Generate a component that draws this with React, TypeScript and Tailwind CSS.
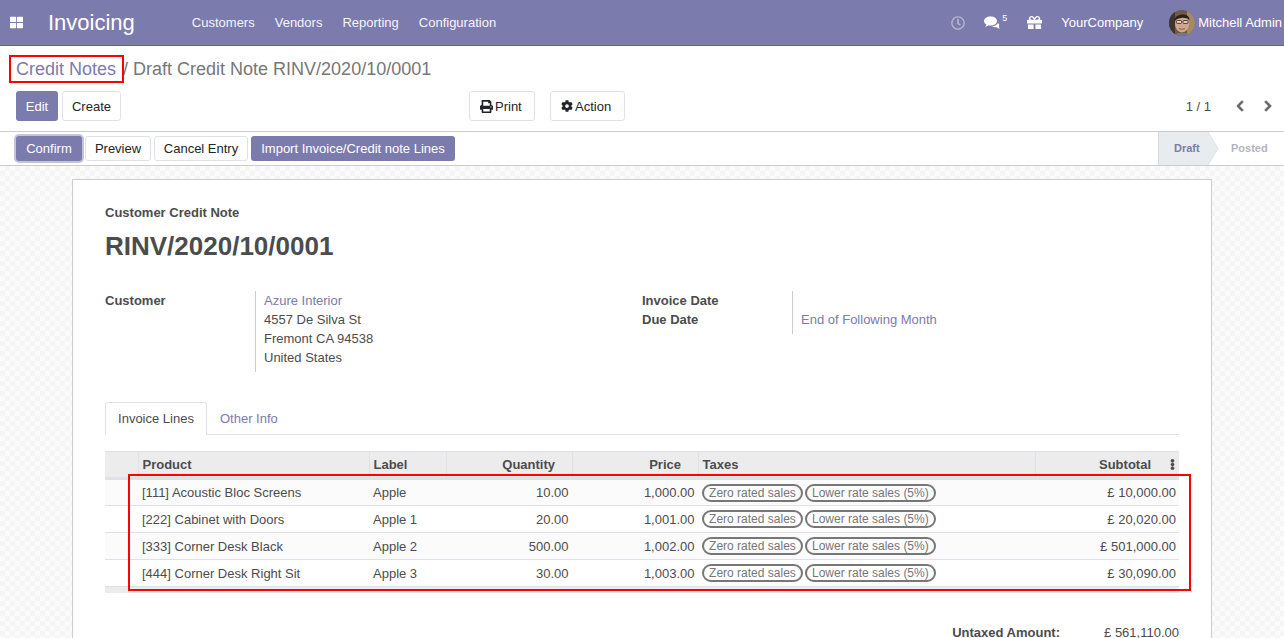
import { FaThLarge, FaRegClock, FaGift, FaPrint, FaCog, FaChevronLeft, FaChevronRight, FaEllipsisV } from "react-icons/fa";

const rows = [
  ["[111] Acoustic Bloc Screens", "Apple", "10.00", "1,000.00", "£ 10,000.00"],
  ["[222] Cabinet with Doors", "Apple 1", "20.00", "1,001.00", "£ 20,020.00"],
  ["[333] Corner Desk Black", "Apple 2", "500.00", "1,002.00", "£ 501,000.00"],
  ["[444] Corner Desk Right Sit", "Apple 3", "30.00", "1,003.00", "£ 30,090.00"],
];

function Tag({ children }: { children: string }) {
  return (
    <span className="inline-block h-[18px] rounded-[9px] border-2 border-[#777] px-[5.1px] text-[12px] leading-[14px] text-[#777]">
      {children}
    </span>
  );
}

function Avatar() {
  return (
    <svg width="26" height="26" viewBox="0 0 26 26" className="rounded-full">
      <rect width="26" height="26" fill="#6f5a48" />
      <rect x="18" y="0" width="8" height="26" fill="#a58a68" />
      <rect x="0" y="0" width="6" height="26" fill="#3f352e" />
      <ellipse cx="13" cy="14" rx="7" ry="8.5" fill="#d2a68c" />
      <path d="M5.5 11 C5 3 21 2 20.5 10 C17 7 10 7 5.5 11Z" fill="#2b211b" />
      <rect x="7.5" y="10.5" width="5" height="3" rx="1" fill="#e3c9b8" stroke="#2a2a2a" strokeWidth="0.8" />
      <rect x="14" y="10.5" width="5" height="3" rx="1" fill="#e3c9b8" stroke="#2a2a2a" strokeWidth="0.8" />
      <path d="M5 26 C7 21.5 19 21.5 22 26Z" fill="#6b7c86" />
      <path d="M10 18.5 Q13 20 16 18.5" fill="none" stroke="#8f5f4c" strokeWidth="1" />
    </svg>
  );
}

function Bubbles() {
  return (
    <svg width="16" height="14" viewBox="0 0 16 14" className="ml-[19px]" fill="currentColor">
      <path d="M6.5 0.5 C10.2 0.5 13 2.5 13 5 C13 7.5 10.2 9.5 6.5 9.5 C5.8 9.5 5.2 9.4 4.6 9.3 C3.6 10.2 2.4 10.8 1 11 C1.8 10.2 2.3 9.3 2.4 8.4 C0.9 7.6 0 6.4 0 5 C0 2.5 2.9 0.5 6.5 0.5Z" />
      <path d="M14 7 C15.2 7.8 15.6 9 15 10 C14.8 10.5 14.9 11.5 16 12.5 C14.6 12.5 13.4 12 12.6 11.2 C11 11.5 9.2 11.2 8 10.3 C10.8 10.2 13.2 9 14 7Z" />
    </svg>
  );
}

export default function App() {
  return (
    <div className="relative h-[638px] w-full overflow-hidden bg-white font-['Liberation_Sans',Arial,sans-serif] text-[13px] leading-[19px] text-[#4c4c4c]">
      {/* Navbar */}
      <header className="flex h-[46px] items-center border-b border-[#5f5e97] bg-[#7c7bad] text-white">
        <FaThLarge className="ml-[10px] size-[13px]" />
        <span className="ml-[25px] text-[22px] leading-[26px]">Invoicing</span>
        <nav className="ml-[57px] flex gap-[20px] text-[13px] text-[#f4f4f8]">
          <span>Customers</span>
          <span>Vendors</span>
          <span>Reporting</span>
          <span>Configuration</span>
        </nav>
        <div className="ml-auto mr-[2px] flex items-center">
          <FaRegClock className="size-[14px] text-[#b9b8d4]" />
          <Bubbles />
          <sup className="ml-[2px] text-[9px] leading-none">5</sup>
          <FaGift className="ml-[20px] size-[15px]" />
          <span className="ml-[19px]">YourCompany</span>
          <span className="ml-[26px] flex items-center gap-[3px] whitespace-nowrap">
            <Avatar />
            Mitchell Admin
          </span>
        </div>
      </header>

      {/* Control panel */}
      <section className="h-[86px] border-b border-[#ccc] px-[16px]">
        <div className="pt-[11px] text-[18px] leading-[24px] text-[#777]">
          <span className="text-[#7c7bad]">Credit Notes</span>
          <span className="ml-[2px]"> / Draft Credit Note RINV/2020/10/0001</span>
        </div>
        <div className="mt-[10px] flex items-center">
          <button className="h-[30px] w-[42px] rounded-[3px] bg-[#7c7bad] text-white">Edit</button>
          <button className="ml-[4px] h-[30px] w-[59px] rounded-[3px] border border-[#dee2e6] text-[#212529]">Create</button>
          <button className="ml-[348px] flex h-[30px] w-[66px] items-center gap-[2px] rounded-[3px] border border-[#dee2e6] pl-[10px] text-[#212529]">
            <FaPrint className="size-[13px]" />
            Print
          </button>
          <button className="ml-[15px] flex h-[30px] w-[75px] items-center gap-[2px] rounded-[3px] border border-[#dee2e6] pl-[10px] text-[#212529]">
            <FaCog className="size-[12px]" />
            Action
          </button>
          <span className="ml-auto mr-[-3px] text-[#4c4c4c]">1 / 1</span>
          <FaChevronLeft className="ml-[26px] size-[12px] stroke-[#666] text-[#666] [stroke-width:40]" />
          <FaChevronRight className="ml-[16px] mr-[-6px] size-[12px] stroke-[#666] text-[#666] [stroke-width:40]" />
        </div>
      </section>

      {/* Status bar */}
      <section className="flex h-[34px] items-center border-b border-[#ccc] pl-[16px]">
        <button className="h-[25px] w-[66px] rounded-[3px] bg-[#7c7bad] text-white shadow-[0_0_0_2px_#c4c3dc]">Confirm</button>
        <button className="ml-[3px] h-[25px] w-[66px] rounded-[3px] border border-[#dee2e6] text-[#212529]">Preview</button>
        <button className="ml-[3px] h-[25px] w-[94px] rounded-[3px] border border-[#dee2e6] text-[#212529]">Cancel Entry</button>
        <button className="ml-[3px] h-[25px] w-[204px] rounded-[3px] bg-[#7c7bad] text-white">Import Invoice/Credit note Lines</button>
        <div className="ml-auto flex h-full items-stretch text-[11px] font-bold">
          <span className="relative flex w-[50px] items-center border-l border-[#d5d9de] bg-[#e9ecef] pl-[15px] text-[#7c7bad]">
            Draft
            <svg width="11" height="33" viewBox="0 0 11 33" className="absolute left-[49px] top-0">
              <path d="M0 0 L10 16.5 L0 33" fill="#e9ecef" stroke="#dee2e6" />
            </svg>
          </span>
          <span className="flex w-[76px] items-center pl-[23px] text-[#b4b4c0]">Posted</span>
        </div>
      </section>

      {/* Sheet area */}
      <main className="h-[472px] bg-[repeating-conic-gradient(#f5f5f5_0_25%,#fbfbfb_0_50%)] bg-size-[10px_10px] px-[72px] pt-[13px]">
        <div className="h-[600px] border border-[#ccc] bg-white px-[32px] pt-[23px]">
          <div className="font-bold leading-[19px]">Customer Credit Note</div>
          <h1 className="mt-[9px] text-[26px] font-bold leading-[31px]">RINV/2020/10/0001</h1>

          <div className="mt-[29px] flex">
            <div className="flex w-[537px]">
              <div className="w-[150px] font-bold">Customer</div>
              <div className="h-[81px] border-l border-[#ccc] pl-[8px]">
                <div className="text-[#7c7bad]">Azure Interior</div>
                <div>4557 De Silva St</div>
                <div>Fremont CA 94538</div>
                <div>United States</div>
              </div>
            </div>
            <div className="flex">
              <div className="w-[150px] font-bold">
                <div>Invoice Date</div>
                <div>Due Date</div>
              </div>
              <div className="h-[43px] border-l border-[#ccc] pl-[8px]">
                <div className="h-[19px]" />
                <div className="text-[#7c7bad]">End of Following Month</div>
              </div>
            </div>
          </div>

          <div className="mt-[30px] flex h-[33px] border-b border-[#dee2e6]">
            <span className="h-[33px] w-[102px] rounded-t-[3px] border border-b-0 border-[#dee2e6] bg-white pt-[6px] text-center">Invoice Lines</span>
            <span className="ml-[13px] pt-[7px] text-[#7c7bad]">Other Info</span>
          </div>

          <table className="mt-[16px] w-[1074px] table-fixed border-collapse">
            <thead>
              <tr className="h-[27px] border-t border-[#dee2e6] bg-[#ececec] font-bold">
                <th className="w-[33px] border-r border-[#dee2e6]" />
                <th className="w-[231px] border-r border-[#dee2e6] pb-[1px] pl-[4px] text-left">Product</th>
                <th className="w-[77px] border-r border-[#dee2e6] pb-[1px] pl-[4px] text-left">Label</th>
                <th className="w-[126px] border-r border-[#dee2e6] pb-[1px] pr-[16.5px] text-right">Quantity</th>
                <th className="w-[126px] border-r border-[#dee2e6] pb-[1px] pr-[16.5px] text-right">Price</th>
                <th className="w-[337px] border-r border-[#dee2e6] pb-[1px] pl-[4px] text-left">Taxes</th>
                <th className="relative pb-[1px] pr-[28px] text-right">
                  Subtotal
                  <FaEllipsisV className="absolute right-[1px] top-[7px] size-[11px] stroke-[#4c4c4c] text-[#4c4c4c] [stroke-width:30]" />
                </th>
              </tr>
            </thead>
            <tbody className="border-t-[3px] border-[#dee2e6]">
              {rows.map((r, i) => (
                <tr key={r[0]} className={`h-[27px] border-b border-[#dee2e6] ${i % 2 === 0 ? "bg-[#fbfbfb]" : "bg-white"}`}>
                  <td />
                  <td className="pl-[4px]">{r[0]}</td>
                  <td className="pl-[4px]">{r[1]}</td>
                  <td className="pr-[3.5px] text-right">{r[2]}</td>
                  <td className="pr-[3.5px] text-right">{r[3]}</td>
                  <td className="whitespace-nowrap pl-[4px]">
                    <span className="flex gap-[2px]">
                      <Tag>Zero rated sales</Tag>
                      <Tag>Lower rate sales (5%)</Tag>
                    </span>
                  </td>
                  <td className="pr-[3px] text-right">{r[4]}</td>
                </tr>
              ))}
            </tbody>
            <tfoot>
              <tr className="h-[6px] bg-[#ececec]">
                <td colSpan={7} />
              </tr>
            </tfoot>
          </table>

          <div className="mt-[30px] flex justify-end">
            <span className="font-bold">Untaxed Amount:</span>
            <span className="w-[119px] text-right">£ 561,110.00</span>
          </div>
        </div>
      </main>

      {/* Red annotation boxes */}
      <div className="absolute left-[9px] top-[55px] h-[28px] w-[115px] border-2 border-[#f00]" />
      <div className="absolute left-[128px] top-[474px] h-[117px] w-[1063px] border-2 border-[#f00]" />
    </div>
  );
}
